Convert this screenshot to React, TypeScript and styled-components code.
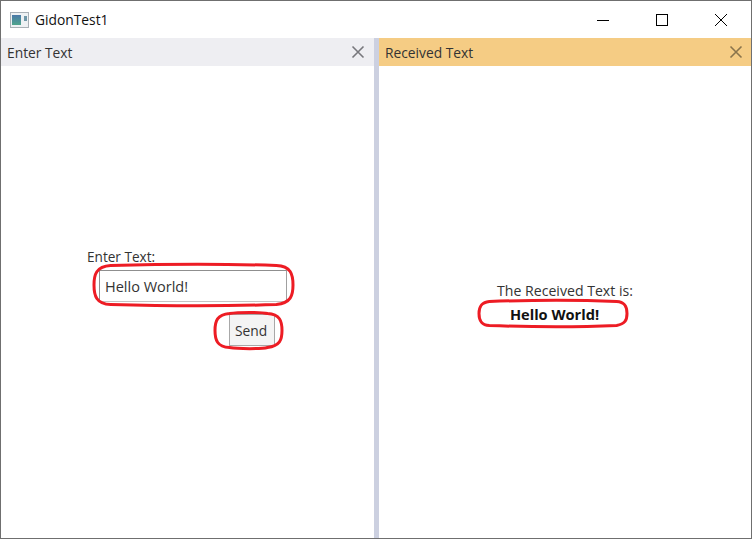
import React from 'react';
import styled, {createGlobalStyle} from 'styled-components';

const GlobalStyle = createGlobalStyle`
  html, body {
    margin: 0;
    padding: 0;
    background: #fff;
  }
`;

const Window = styled.div`
  box-sizing: border-box;
  width: 752px;
  height: 539px;
  display: flex;
  flex-direction: column;
  border: 1px solid #6f6f6f;
  background: #fff;
  color: #333;
  font-family: "Open Sans", "Noto Sans", sans-serif;
  font-size: 13.8px;
  overflow: hidden;
`;

const TitleBar = styled.header`
  height: 37px;
  flex: none;
  display: flex;
  align-items: center;
  padding: 0 1px 0 9px;
`;

const AppIcon = styled.svg`
  width: 19px;
  height: 16px;
  margin: 1px 6px 0 0;
  flex: none;
`;

const WindowTitle = styled.span`
  flex: 1;
  color: #111;
  font-size: 13.8px;
`;

const WindowButton = styled.button`
  width: 59px;
  height: 37px;
  padding: 0;
  border: none;
  background: none;
  display: flex;
  align-items: center;
  justify-content: center;
`;

const Panes = styled.div`
  flex: 1;
  display: flex;
  min-height: 0;
`;

const Pane = styled.section<{$width: number}>`
  width: ${p => p.$width}px;
  flex: none;
  display: flex;
  flex-direction: column;
`;

const Splitter = styled.div`
  width: 5px;
  flex: none;
  background: #ccd0e0;
`;

const PaneHeader = styled.div<{$active?: boolean}>`
  height: 28px;
  flex: none;
  display: flex;
  align-items: center;
  justify-content: space-between;
  padding: 0 ${p => (p.$active ? 8 : 9)}px 0 6px;
  background: ${p => (p.$active ? '#f5cc84' : '#eeeef2')};
`;

const CloseIcon = styled.svg`
  width: 14px;
  height: 14px;
  display: block;
`;

const PaneBody = styled.div`
  flex: 1;
  display: flex;
  align-items: center;
  justify-content: center;
`;

const Form = styled.div`
  width: 200px;
  margin-right: 1px;
  display: flex;
  flex-direction: column;
  align-items: flex-end;
  padding-bottom: 10px;
`;

const Label = styled.div`
  align-self: flex-start;
  line-height: 18px;
  height: 22px;
  font-size: 13.6px;
`;

const Marked = styled.div`
  position: relative;
`;

const Oval = styled.svg<{$left: number; $top: number}>`
  position: absolute;
  left: ${p => p.$left}px;
  top: ${p => p.$top}px;
  overflow: visible;
  pointer-events: none;
`;

const TextField = styled.input`
  box-sizing: border-box;
  display: block;
  width: 188px;
  height: 32px;
  padding: 1px 5px 0;
  border: 1px solid #8f8f8f;
  border-bottom-color: #c4c4c4;
  border-right-color: #a0a0a0;
  outline: none;
  background: #fff;
  color: #333;
  font: inherit;
  font-size: 14.5px;
`;

const SendWrap = styled(Marked)`
  margin: 12px 12px 0 0;
`;

const SendButton = styled.button`
  display: block;
  box-sizing: border-box;
  width: 46px;
  height: 32px;
  padding: 0 2px 0 0;
  border: 1px solid #a8a8a8;
  background: #f4f4f4;
  color: #333;
  font: inherit;
  font-size: 13.8px;
`;

const Received = styled.div`
  display: flex;
  flex-direction: column;
  align-items: center;
`;

const ReceivedLabel = styled.div`
  line-height: 19px;
  height: 24px;
  font-size: 14.1px;
`;

const ReceivedValue = styled(Marked)`
  margin-right: 21px;
  font-weight: 700;
  color: #111;
  line-height: 19px;
  height: 18px;
  font-size: 14.6px;
`;

function Close({color}: {color: string}) {
  return (
    <CloseIcon viewBox="0 0 14 14">
      <path d="M1.5 1.5 12.5 12.5M12.5 1.5 1.5 12.5" stroke={color} strokeWidth="1.6" fill="none"/>
    </CloseIcon>
  );
}

function RedOval({w, h, left, top}: {w: number; h: number; left: number; top: number}) {
  const r = h * 0.42;
  const d = `M${r} 1.5 C${w * 0.35} 0 ${w * 0.7} 0 ${w - r} 1.5 C${w - 3} 2 ${w - 1} ${r * 0.6} ${w - 1} ${h / 2}
    C${w - 1} ${h - r * 0.6} ${w - 3} ${h - 3} ${w - r} ${h - 1.5} C${w * 0.7} ${h} ${w * 0.35} ${h} ${r} ${h - 1.5}
    C3 ${h - 2} 1 ${h - r * 0.6} 1 ${h / 2} C1 ${r * 0.6} 3 2.5 ${r} 1.5Z`;
  return (
    <Oval $left={left} $top={top} width={w} height={h} viewBox={`0 0 ${w} ${h}`}>
      <path d={d} fill="none" stroke="#ed1c24" strokeWidth="3"/>
    </Oval>
  );
}

export default function App() {
  return (
    <Window>
      <GlobalStyle/>
      <TitleBar>
        <AppIcon viewBox="0 0 19 16">
          <defs>
            <linearGradient id="appIconFill" x1="0" y1="0" x2="0" y2="1">
              <stop offset="0" stopColor="#4a78a8"/>
              <stop offset="1" stopColor="#4fa58c"/>
            </linearGradient>
          </defs>
          <rect x="0.5" y="0.5" width="18" height="15" fill="#eef1f3" stroke="#a9b0b6"/>
          <rect x="2" y="3" width="9" height="10" fill="url(#appIconFill)"/>
          <rect x="14" y="4" width="3" height="5" fill="#6f97a8"/>
        </AppIcon>
        <WindowTitle>GidonTest1</WindowTitle>
        <WindowButton aria-label="Minimize">
          <svg width="12" height="12" viewBox="0 0 12 12"><path d="M0 6.5H12" stroke="#000"/></svg>
        </WindowButton>
        <WindowButton aria-label="Maximize">
          <svg width="12" height="12" viewBox="0 0 12 12"><rect x="0.5" y="0.5" width="11" height="11" fill="none" stroke="#000"/></svg>
        </WindowButton>
        <WindowButton aria-label="Close">
          <svg width="12" height="12" viewBox="0 0 12 12"><path d="M0 0 12 12M12 0 0 12" stroke="#000"/></svg>
        </WindowButton>
      </TitleBar>
      <Panes>
        <Pane $width={373}>
          <PaneHeader>
            <span>Enter Text</span>
            <Close color="#77777c"/>
          </PaneHeader>
          <PaneBody>
            <Form>
              <Label>Enter Text:</Label>
              <Marked>
                <TextField defaultValue="Hello World!"/>
                <RedOval w={201} h={42} left={-6} top={-6}/>
              </Marked>
              <SendWrap>
                <SendButton>Send</SendButton>
                <RedOval w={69} h={37} left={-15} top={-2}/>
              </SendWrap>
            </Form>
          </PaneBody>
        </Pane>
        <Splitter/>
        <Pane $width={372}>
          <PaneHeader $active>
            <span>Received Text</span>
            <Close color="#8a744c"/>
          </PaneHeader>
          <PaneBody>
            <Received>
              <ReceivedLabel>The Received Text is:</ReceivedLabel>
              <ReceivedValue>
                Hello World!
                <RedOval w={150} h={27} left={-32} top={-5}/>
              </ReceivedValue>
            </Received>
          </PaneBody>
        </Pane>
      </Panes>
    </Window>
  );
}
